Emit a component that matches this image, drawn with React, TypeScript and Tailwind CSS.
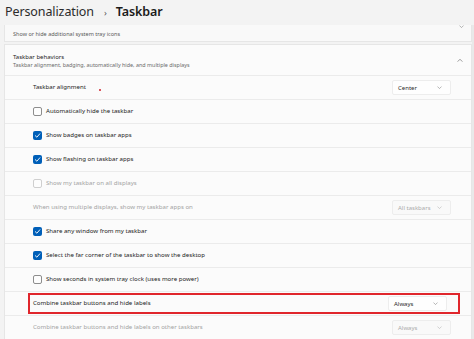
import React from "react";

const font = { fontFamily: '"Noto Sans", "Open Sans", sans-serif' };

function Chevron({ up = false, color = "#7a7a7a", size = 7 }: { up?: boolean; color?: string; size?: number }) {
  return (
    <svg width={size} height={size * 0.7} viewBox="0 0 7 5" fill="none">
      <path
        d={up ? "M1 4 L3.5 1.5 L6 4" : "M1 1.2 L3.5 3.7 L6 1.2"}
        stroke={color}
        strokeWidth="0.9"
        strokeLinecap="round"
        strokeLinejoin="round"
      />
    </svg>
  );
}

function Check({ checked, disabled }: { checked: boolean; disabled?: boolean }) {
  if (checked) {
    return (
      <div className="w-[9px] h-[9px] rounded-[2px] bg-[#005fb8] flex items-center justify-center">
        <svg width="7" height="7" viewBox="0 0 7 7" fill="none">
          <path d="M1.3 3.7 L2.9 5.2 L5.8 1.8" stroke="white" strokeWidth="0.9" strokeLinecap="round" strokeLinejoin="round" />
        </svg>
      </div>
    );
  }
  return (
    <div
      className={
        "w-[9px] h-[9px] rounded-[2px] bg-[#fdfdfd] border-[0.8px] " +
        (disabled ? "border-[#cfcfcf]" : "border-[#8d8d8d]")
      }
    />
  );
}

function Dropdown({ label, disabled }: { label: string; disabled?: boolean }) {
  return (
    <div
      className={
        "w-[59px] h-[15px] rounded-[2px] border border-[#ededed] flex items-center justify-between pl-[5px] pr-[8px] " +
        (disabled ? "bg-[#f9f9f9]" : "bg-[#fefefe]")
      }
    >
      <span className={"text-[6px] leading-none " + (disabled ? "text-[#ababab]" : "text-[#2a2a2a]")}>{label}</span>
      <Chevron size={5} color={disabled ? "#b8b8b8" : "#8a8a8a"} />
    </div>
  );
}

type Row = {
  label: string;
  check?: "on" | "off" | "offdis";
  disabled?: boolean;
  dropdown?: { label: string; disabled?: boolean };
  highlight?: boolean;
};

const rows: Row[] = [
  { label: "Taskbar alignment", dropdown: { label: "Center" } },
  { label: "Automatically hide the taskbar", check: "off" },
  { label: "Show badges on taskbar apps", check: "on" },
  { label: "Show flashing on taskbar apps", check: "on" },
  { label: "Show my taskbar on all displays", check: "offdis", disabled: true },
  { label: "When using multiple displays, show my taskbar apps on", disabled: true, dropdown: { label: "All taskbars", disabled: true } },
  { label: "Share any window from my taskbar", check: "on" },
  { label: "Select the far corner of the taskbar to show the desktop", check: "on" },
  { label: "Show seconds in system tray clock (uses more power)", check: "off" },
  { label: "Combine taskbar buttons and hide labels", dropdown: { label: "Always" }, highlight: true },
  { label: "Combine taskbar buttons and hide labels on other taskbars", disabled: true, dropdown: { label: "Always", disabled: true } },
];

export default function App() {
  return (
    <div className="w-[474px] h-[339px] bg-[#f3f3f3] overflow-hidden relative" style={font}>
      <div className="h-[25px] flex items-center pl-[5px] pb-[1px] text-[#1a1a1a]">
        <span className="text-[12.5px] leading-none text-[#2b2b2b] tracking-[-0.1px]">Personalization</span>
        <span className="text-[9px] leading-none text-[#555] mt-[1px] ml-[10px] mr-[9px]">›</span>
        <span className="text-[12.5px] leading-none font-semibold tracking-[-0.1px]">Taskbar</span>
      </div>
      <div className="flex">
        <div className="flex-1 pl-[4px]">
          {/* card 1 (scrolled) */}
          <div className="h-[17px] bg-[#f9f9f9] border-b border-[#e6e6e6] border-x relative flex items-center pl-[8px] pt-[3px]">
            <span className="text-[5.5px] leading-none text-[#5a5a5a]">Show or hide additional system tray icons</span>
            <div className="absolute right-[7px] top-[0px]">
              <Chevron size={5} color="#8a8a8a" />
            </div>
          </div>
          {/* card 2 */}
          <div className="mt-[2px] border-x border-[#e6e6e6] bg-[#fbfbfb]">
            <div className="h-[31px] flex items-center justify-between pl-[8px] pr-[8px] border-t border-[#e6e6e6]">
              <div className="flex flex-col gap-[1px] mt-[2px]">
                <span className="text-[6px] leading-[8px] text-[#1b1b1b]">Taskbar behaviors</span>
                <span className="text-[5.4px] leading-[7px] text-[#6a6a6a]">
                  Taskbar alignment, badging, automatically hide, and multiple displays
                </span>
              </div>
              <Chevron up size={6} color="#7a7a7a" />
            </div>
            {rows.map((r, i) => (
              <div key={i} className="h-[24px] border-t border-[#ebebeb] flex items-center px-[1px]">
                {r.highlight ? (
                  <div className="flex-1 ml-[22px] mr-[10px] h-[21px] border-2 border-[#e0262c] flex items-center justify-between pl-[3px] pr-[11px]">
                    <span className="text-[6.1px] leading-none text-[#222]">{r.label}</span>
                    {r.dropdown && <Dropdown label={r.dropdown.label} disabled={r.dropdown.disabled} />}
                  </div>
                ) : (
                  <div className="flex-1 h-[21px] flex items-center justify-between pl-[27px] pr-[19px]">
                    <div className="flex items-center gap-[4px] relative">
                      {r.check && <Check checked={r.check === "on"} disabled={r.check === "offdis"} />}
                      <span className={"text-[6.1px] leading-none " + (r.disabled ? "text-[#a3a3a3]" : "text-[#222]")}>
                        {r.label}
                      </span>
                      {i === 0 && <div className="absolute left-[66px] top-[5px] w-[2px] h-[2px] rounded-full bg-[#d0202a]" />}
                    </div>
                    {r.dropdown && <Dropdown label={r.dropdown.label} disabled={r.dropdown.disabled} />}
                  </div>
                )}
              </div>
            ))}
          </div>
        </div>
        <div className="w-[2px] bg-[#e9e9e9]" />
      </div>
    </div>
  );
}
